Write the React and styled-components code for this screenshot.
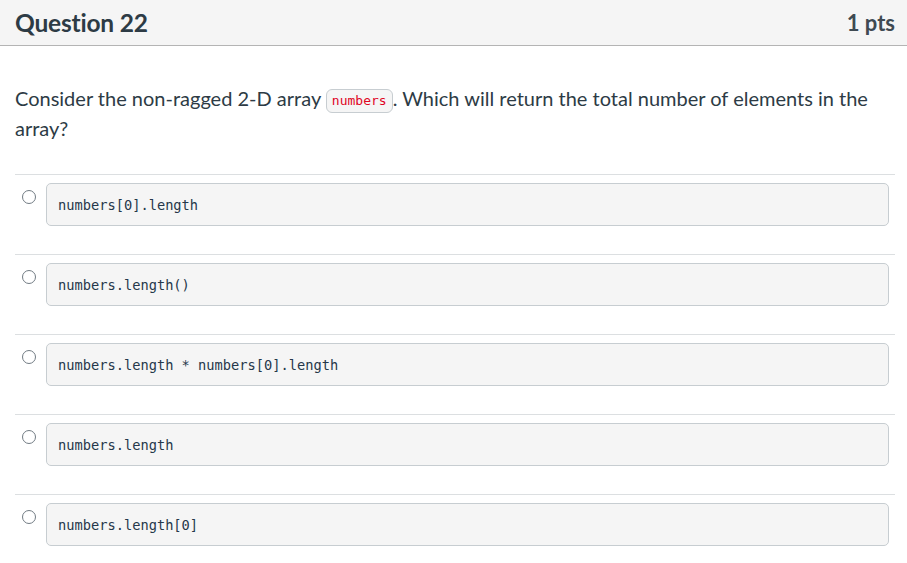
import React from "react";
import styled, { createGlobalStyle } from "styled-components";

const Global = createGlobalStyle`
    body {
        margin: 0;
        background: #ffffff;
        font-family: Lato, "Noto Sans", sans-serif;
        color: #2d3b45;
    }
`;

const answers = [
    "numbers[0].length",
    "numbers.length()",
    "numbers.length * numbers[0].length",
    "numbers.length",
    "numbers.length[0]",
];

const App = () => {
    return (
        <>
            <Global />
            <Card>
                <Header>
                    <Title>Question 22</Title>
                    <Points>1 pts</Points>
                </Header>
                <Body>
                    <Prompt>
                        Consider the non-ragged 2-D array <InlineCode>numbers</InlineCode>. Which
                        will return the total number of elements in the array?
                    </Prompt>
                    <Answers>
                        {answers.map((a) => (
                            <Answer key={a}>
                                <Radio type="radio" name="q22" />
                                <CodeBox>{a}</CodeBox>
                            </Answer>
                        ))}
                    </Answers>
                </Body>
            </Card>
        </>
    );
};

const Card = styled.div`
    width: 907px;
`;

const Header = styled.div`
    display: flex;
    justify-content: space-between;
    align-items: center;
    height: 45px;
    padding: 0 12px 0 15px;
    background: #f5f5f5;
    border-bottom: 1px solid #b4b4b4;
`;

const Title = styled.h2`
    margin: 0;
    font-size: 24.5px;
    font-weight: 700;
    color: #2d3b45;
    letter-spacing: -0.2px;
`;

const Points = styled.div`
    font-size: 22px;
    font-weight: 700;
    color: #3f4a52;
`;

const Body = styled.div`
    padding: 0 12px 0 15px;
`;

const Prompt = styled.p`
    margin: 0;
    padding: 37px 0 31px;
    font-size: 20px;
    line-height: 30px;
    color: #2d3b45;
`;

const InlineCode = styled.code`
    display: inline-block;
    font-family: "DejaVu Sans Mono", monospace;
    font-size: 13px;
    line-height: 22px;
    color: #e0061f;
    background: #f5f5f5;
    border: 1px solid #c7cdd1;
    border-radius: 6px;
    padding: 0 5px;
    vertical-align: 1px;
`;

const Answers = styled.div`
    display: flex;
    flex-direction: column;
`;

const Answer = styled.label`
    display: flex;
    align-items: flex-start;
    border-top: 1px solid #dcdfe1;
    padding: 8px 0 28px;
`;

const Radio = styled.input`
    appearance: none;
    width: 14px;
    height: 14px;
    margin: 7px 10px 0 7px;
    border: 1px solid #717b83;
    border-radius: 50%;
    background: #fff;
    flex-shrink: 0;
`;

const CodeBox = styled.div`
    flex: 1;
    margin-right: 6px;
    height: 43px;
    box-sizing: border-box;
    display: flex;
    align-items: center;
    padding: 0 11px;
    font-family: "DejaVu Sans Mono", monospace;
    font-size: 13.7px;
    color: #26384a;
    background: #f5f5f5;
    border: 1px solid #c7cdd1;
    border-radius: 5px;
    white-space: pre;
`;

export default App;
